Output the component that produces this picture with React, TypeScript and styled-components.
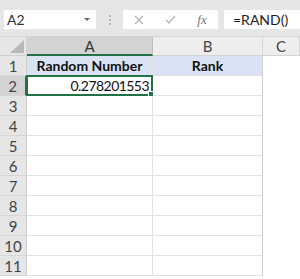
import React from "react";
import styled, { createGlobalStyle } from "styled-components";

const Global = createGlobalStyle`
  html, body { margin: 0; padding: 0; background: #ffffff; }
  body { width: 300px; height: 279px; overflow: hidden; font-family: "Lato", "Liberation Sans", sans-serif; }
`;

const Page = styled.div`
  width: 300px;
  height: 279px;
  display: flex;
  flex-direction: column;
  overflow: hidden;
`;

const FormulaBar = styled.div`
  height: 37px;
  flex: none;
  background: #e6e6e6;
  display: flex;
  align-items: flex-start;
  padding-top: 10px;
  box-sizing: border-box;
  border-bottom: 1px solid #d6d6d6;
`;

const NameBox = styled.div`
  margin-left: 4px;
  width: 92px;
  height: 19px;
  background: #fff;
  display: flex;
  align-items: center;
  justify-content: space-between;
  padding: 0 6px 0 3px;
  box-sizing: border-box;
  font-size: 14px;
  color: #333;
`;

const Caret = styled.span`
  width: 0;
  height: 0;
  border-left: 3px solid transparent;
  border-right: 3px solid transparent;
  border-top: 3px solid #666;
`;

const Grip = styled.div`
  width: 27px;
  height: 19px;
  display: flex;
  flex-direction: column;
  align-items: center;
  justify-content: center;
  gap: 2px;
  span {
    width: 2px;
    height: 2px;
    background: #a8a8a8;
    border-radius: 1px;
  }
`;

const ActionBox = styled.div`
  width: 95px;
  height: 19px;
  background: #fff;
  display: flex;
  align-items: center;
  color: #b0b0b0;
`;

const Action = styled.div<{ $w: number }>`
  width: ${(p) => p.$w}px;
  display: flex;
  align-items: center;
  justify-content: center;
`;

const Fx = styled.span`
  font-family: "Liberation Serif", serif;
  font-style: italic;
  font-size: 13px;
  color: #777;
`;

const FormulaInput = styled.div`
  margin-left: 6px;
  flex: 1;
  height: 19px;
  background: #fff;
  display: flex;
  align-items: center;
  padding-left: 9px;
  font-size: 14px;
  color: #222;
`;

const Grid = styled.div`
  display: grid;
  grid-template-columns: 27px 126px 110px 1fr;
  grid-template-rows: 19px repeat(11, 20px);
`;

const Corner = styled.div`
  background: #e6e6e6;
  border-right: 1px solid #d0d0d0;
  border-bottom: 1px solid #d0d0d0;
  box-sizing: border-box;
  display: flex;
  align-items: flex-end;
  justify-content: flex-end;
  padding: 0 2px 2px 0;
`;

const Triangle = styled.div`
  width: 0;
  height: 0;
  border-left: 14px solid transparent;
  border-bottom: 13px solid #b8b8b8;
`;

const ColHead = styled.div<{ $sel?: boolean }>`
  background: ${(p) => (p.$sel ? "#d3d3d3" : "#eeeeee")};
  border-right: 1px solid ${(p) => (p.$sel ? "#bdbdbd" : "#d4d4d4")};
  border-bottom: ${(p) => (p.$sel ? "2px solid #217346" : "1px solid #d4d4d4")};
  box-sizing: border-box;
  display: flex;
  align-items: center;
  justify-content: center;
  font-size: 15px;
  color: ${(p) => (p.$sel ? "#333" : "#444")};
`;

const RowHead = styled.div<{ $sel?: boolean }>`
  background: ${(p) => (p.$sel ? "#d3d3d3" : "#e6e6e6")};
  border-right: ${(p) => (p.$sel ? "2px solid #217346" : "1px solid #d0d0d0")};
  border-bottom: 1px solid #d6d6d6;
  box-sizing: border-box;
  display: flex;
  align-items: center;
  justify-content: center;
  font-size: 15px;
  color: #444;
`;

const Cell = styled.div<{ $fill?: boolean; $bold?: boolean; $align?: string; $edge?: boolean }>`
  position: relative;
  background: ${(p) => (p.$fill ? "#dae3f3" : "#ffffff")};
  border-right: 1px solid ${(p) => (p.$edge ? "#d0d0d0" : "#e2e2e2")};
  border-bottom: 1px solid #e2e2e2;
  box-sizing: border-box;
  display: flex;
  align-items: center;
  justify-content: ${(p) => p.$align || "flex-start"};
  padding: 0 3px;
  font-size: ${(p) => (p.$bold ? "14px" : "14px")};
  letter-spacing: ${(p) => (p.$bold ? "0" : "-0.55px")};
  font-weight: ${(p) => (p.$bold ? 700 : 400)};
  color: #111;
  white-space: nowrap;
`;

const EmptyCell = styled.div`
  background: #fff;
`;

const Selection = styled.div`
  position: absolute;
  left: -1px;
  top: -1px;
  right: -1px;
  bottom: -1px;
  border: 2px solid #217346;
  pointer-events: none;
`;

const Handle = styled.div`
  position: absolute;
  right: -4px;
  bottom: -4px;
  width: 5px;
  height: 5px;
  background: #217346;
  border: 1px solid #fff;
`;

const XIcon = () => (
  <svg width="10" height="10" viewBox="0 0 10 10">
    <path d="M1 1 L9 9 M9 1 L1 9" stroke="#b3b3b3" strokeWidth="1.2" fill="none" />
  </svg>
);

const CheckIcon = () => (
  <svg width="11" height="9" viewBox="0 0 11 9">
    <path d="M1 5 L4 8 L10 1" stroke="#b3b3b3" strokeWidth="1.2" fill="none" />
  </svg>
);

export default function App() {
  const rows = [3, 4, 5, 6, 7, 8, 9, 10, 11];
  return (
    <Page>
      <Global />
      <FormulaBar>
        <NameBox>
          <span>A2</span>
          <Caret />
        </NameBox>
        <Grip>
          <span />
          <span />
          <span />
        </Grip>
        <ActionBox>
          <Action $w={31}>
            <XIcon />
          </Action>
          <Action $w={32}>
            <CheckIcon />
          </Action>
          <Action $w={32}>
            <Fx>fx</Fx>
          </Action>
        </ActionBox>
        <FormulaInput>=RAND()</FormulaInput>
      </FormulaBar>
      <Grid>
        <Corner>
          <Triangle />
        </Corner>
        <ColHead $sel>A</ColHead>
        <ColHead>B</ColHead>
        <ColHead>C</ColHead>

        <RowHead>1</RowHead>
        <Cell $fill $bold $align="center">Random Number</Cell>
        <Cell $fill $bold $align="center" $edge>Rank</Cell>
        <EmptyCell />

        <RowHead $sel>2</RowHead>
        <Cell $align="flex-end">
          0.278201553
          <Selection>
            <Handle />
          </Selection>
        </Cell>
        <Cell $edge />
        <EmptyCell />

        {rows.map((r) => (
          <React.Fragment key={r}>
            <RowHead>{r}</RowHead>
            <Cell />
            <Cell $edge />
            <EmptyCell />
          </React.Fragment>
        ))}
      </Grid>
    </Page>
  );
}
